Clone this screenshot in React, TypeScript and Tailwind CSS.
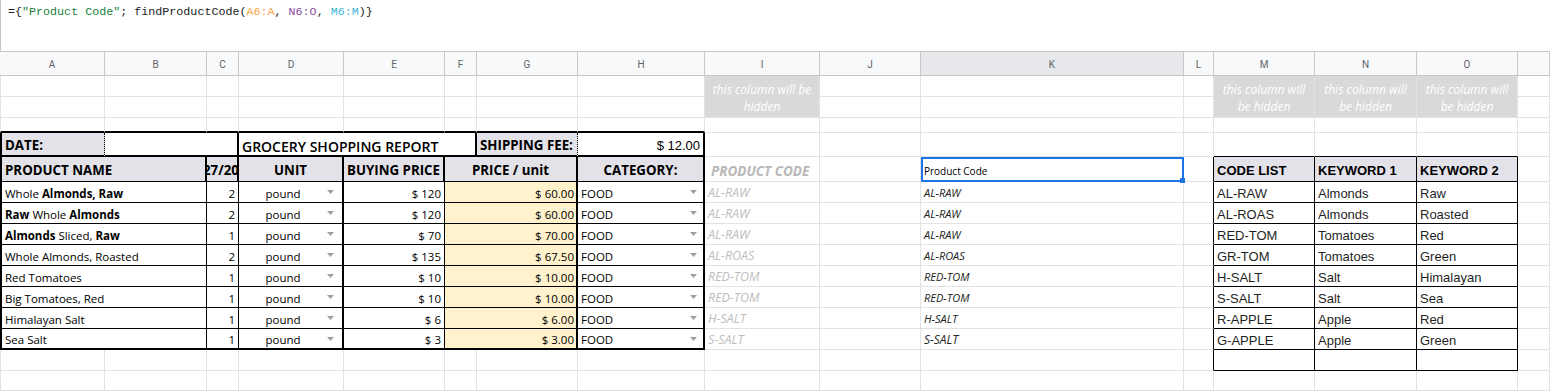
import type { ReactNode } from "react";

const COLS =
  "grid grid-cols-[105px_102px_32px_105px_101px_32px_101px_127px_115px_101px_263px_30px_101px_102px_101px_32px]";

const g = "border-r border-b border-r-[#e2e2e2] border-b-[#e2e2e2]";
const gA = "border-l border-l-[#e2e2e2] border-r border-b border-r-[#e2e2e2] border-b-[#e2e2e2]";
const lBlack = "border-r border-r-black border-b border-b-[#e2e2e2]";
const codeCell = "border-r border-r-black border-b border-b-black";
const head = "border-b border-b-black bg-[#e3e2e8] pt-[4px] text-[13.3px] font-bold";

interface Product {
  name: [string, boolean][];
  qty: number;
  buy: string;
  price: string;
  code: string;
}

const products: Product[] = [
  { name: [["Whole ", false], ["Almonds, Raw", true]], qty: 2, buy: "$ 120", price: "$ 60.00", code: "AL-RAW" },
  { name: [["Raw", true], [" Whole ", false], ["Almonds", true]], qty: 2, buy: "$ 120", price: "$ 60.00", code: "AL-RAW" },
  { name: [["Almonds", true], [" Sliced, ", false], ["Raw", true]], qty: 1, buy: "$ 70", price: "$ 70.00", code: "AL-RAW" },
  { name: [["Whole Almonds, Roasted", false]], qty: 2, buy: "$ 135", price: "$ 67.50", code: "AL-ROAS" },
  { name: [["Red Tomatoes", false]], qty: 1, buy: "$ 10", price: "$ 10.00", code: "RED-TOM" },
  { name: [["Big Tomatoes, Red", false]], qty: 1, buy: "$ 10", price: "$ 10.00", code: "RED-TOM" },
  { name: [["Himalayan Salt", false]], qty: 1, buy: "$ 6", price: "$ 6.00", code: "H-SALT" },
  { name: [["Sea Salt", false]], qty: 1, buy: "$ 3", price: "$ 3.00", code: "S-SALT" },
];

const codeList = [
  ["AL-RAW", "Almonds", "Raw"],
  ["AL-ROAS", "Almonds", "Roasted"],
  ["RED-TOM", "Tomatoes", "Red"],
  ["GR-TOM", "Tomatoes", "Green"],
  ["H-SALT", "Salt", "Himalayan"],
  ["S-SALT", "Salt", "Sea"],
  ["R-APPLE", "Apple", "Red"],
  ["G-APPLE", "Apple", "Green"],
];

function Cell({ c = "", children }: { c?: string; children?: ReactNode }) {
  return (
    <div className={`flex min-w-0 items-center overflow-hidden whitespace-nowrap ${c}`}>
      {children}
    </div>
  );
}

function Note({ text }: { text: string }) {
  return (
    <div className="row-span-2 flex items-center justify-center border-r border-b border-r-[#e2e2e2] border-b-[#e2e2e2] bg-[#d9d9d9] px-[4px] pt-[2px] text-center text-[12px] leading-[17px] text-white italic">
      {text}
    </div>
  );
}

function Arrow() {
  return (
    <svg width="7" height="4" viewBox="0 0 7 4" className="mb-[3px] shrink-0">
      <path d="M0 0h7L3.5 4z" fill="#a0a0a0" />
    </svg>
  );
}

function Blank({ c }: { c: string }) {
  return <div className={c} />;
}

export default function App() {
  return (
    <div className="h-[391px] w-[1550px] overflow-hidden bg-white font-['Open_Sans',sans-serif] text-black">
      {/* formula bar */}
      <div className="h-[52px] border-b border-l border-[#c4c7c5] pt-[4px] pl-[7px] font-['Liberation_Mono',monospace] text-[11.7px] leading-[16px] text-[#222]">
        <span>{"={"}</span>
        <span className="text-[#188038]">"Product Code"</span>
        <span>; findProductCode(</span>
        <span className="text-[#f6a54a]">A6:A</span>
        <span>, </span>
        <span className="text-[#8e4aa0]">N6:O</span>
        <span>, </span>
        <span className="text-[#3cb4d8]">M6:M</span>
        <span>{")}"}</span>
      </div>

      {/* column letters */}
      <div className={`${COLS} h-[24px] border-b border-[#c4c7c5] font-['Roboto',sans-serif] text-[10px] text-[#5f6368]`}>
        {"ABCDEFGHIJKLMNO ".split("").map((l, i) => (
          <div
            key={i}
            className={`flex items-center justify-center border-r border-[#c9c9c9] pt-[1px] ${l === "K" ? "bg-[#e6e8eb]" : "bg-[#f8f9fa]"}`}
          >
            {l}
          </div>
        ))}
      </div>

      {/* sheet */}
      <div className={`${COLS} grid-rows-[21px_21px_15px_24px_25px_repeat(9,21px)_20px] text-[11.5px]`}>
        {/* rows 1-2 */}
        <Blank c={gA} />
        <Blank c={g} />
        <Blank c={g} />
        <Blank c={g} />
        <Blank c={g} />
        <Blank c={g} />
        <Blank c={g} />
        <Blank c={g} />
        <Note text="this column will be hidden" />
        <Blank c={g} />
        <Blank c={g} />
        <Blank c={g} />
        <Note text="this column will be hidden" />
        <Note text="this column will be hidden" />
        <Note text="this column will be hidden" />
        <Blank c={g} />
        <Blank c={gA} />
        <Blank c={g} />
        <Blank c={g} />
        <Blank c={g} />
        <Blank c={g} />
        <Blank c={g} />
        <Blank c={g} />
        <Blank c={g} />
        <Blank c={g} />
        <Blank c={g} />
        <Blank c={g} />
        <Blank c={g} />

        {/* row 3 */}
        <Blank c="border-l border-l-[#e2e2e2] border-r border-r-[#e2e2e2] border-b-2 border-b-black" />
        <Blank c="border-r border-r-[#e2e2e2] border-b-2 border-b-black" />
        <Blank c="border-r border-r-[#e2e2e2] border-b-2 border-b-black" />
        <Blank c="border-r border-r-[#e2e2e2] border-b-2 border-b-black" />
        <Blank c="border-r border-r-[#e2e2e2] border-b-2 border-b-black" />
        <Blank c="border-r border-r-[#e2e2e2] border-b-2 border-b-black" />
        <Blank c="border-r border-r-[#e2e2e2] border-b-2 border-b-black" />
        <Blank c="border-r border-r-[#e2e2e2] border-b-2 border-b-black" />
        <Blank c={g} />
        <Blank c={g} />
        <Blank c={g} />
        <Blank c={g} />
        <Blank c={g} />
        <Blank c={g} />
        <Blank c={g} />
        <Blank c={g} />

        {/* row 4 */}
        <Cell c="border-l-2 border-l-black border-r border-r-black ![border-right-style:dotted] border-b-2 border-b-black bg-[#e3e2e8] pt-[4px] pl-[3px] text-[13.3px] font-bold">
          DATE:
        </Cell>
        <Cell c="col-span-2 border-r-2 border-r-black border-b-2 border-b-black" />
        <Cell c="col-span-3 border-r-2 border-r-black border-b-2 border-b-black pt-[4px] pl-[3px] text-[14px] font-semibold">
          GROCERY SHOPPING REPORT
        </Cell>
        <Cell c="border-r border-r-black ![border-right-style:dotted] border-b-2 border-b-black bg-[#e3e2e8] pt-[4px] pl-[3px] text-[13.3px] font-bold">
          SHIPPING FEE:
        </Cell>
        <Cell c="justify-end border-r-2 border-r-black border-b-2 border-b-black pt-[4px] pr-[3px] font-['Liberation_Sans',Arial,sans-serif] text-[13px]">
          $ 12.00
        </Cell>
        <Blank c={g} />
        <Blank c={g} />
        <Blank c={g} />
        <Blank c={g} />
        <Blank c="border-r border-b border-r-[#e2e2e2] border-b-black" />
        <Blank c="border-r border-b border-r-[#e2e2e2] border-b-black" />
        <Blank c="border-r border-b border-r-[#e2e2e2] border-b-black" />
        <Blank c={g} />

        {/* row 5 */}
        <Cell c={`col-span-2 border-l-2 border-l-black border-r-2 border-r-black ${head} pl-[3px]`}>PRODUCT NAME</Cell>
        <Cell c={`justify-center border-r-2 border-r-black ${head}`}>1/27/2023</Cell>
        <Cell c={`justify-center border-r-2 border-r-black ${head}`}>UNIT</Cell>
        <Cell c={`justify-center border-r-2 border-r-black ${head}`}>BUYING PRICE</Cell>
        <Cell c={`col-span-2 justify-center border-r-2 border-r-black ${head}`}>PRICE / unit</Cell>
        <Cell c={`justify-center border-r-2 border-r-black ${head}`}>CATEGORY:</Cell>
        <Cell c={`${g} pt-[4px] pl-[6px] text-[13.5px] font-bold text-[#b7b7b7] italic`}>PRODUCT CODE</Cell>
        <Blank c={g} />
        <div className="relative flex items-center border-2 border-[#1a73e8] pt-[3px] pl-[1px] text-[10px]">
          Product Code
          <span className="absolute -right-[3px] -bottom-[3px] h-[5px] w-[5px] bg-[#1a73e8]" />
        </div>
        <Blank c={lBlack} />
        {["CODE LIST", "KEYWORD 1", "KEYWORD 2"].map((h) => (
          <Cell
            key={h}
            c={`${codeCell} bg-[#e3e2e8] pt-[4px] pl-[3px] font-['Liberation_Sans',Arial,sans-serif] text-[13px] font-bold`}
          >
            {h}
          </Cell>
        ))}
        <Blank c={g} />

        {/* data rows */}
        {products.map((p, i) => {
          const last = i === products.length - 1;
          const b = last ? "border-b-2 border-b-black" : "border-b border-b-black";
          return [
            <Cell key={`a${i}`} c={`col-span-2 border-l-2 border-l-black border-r border-r-black ${b} pt-[3px] pl-[3px]`}>
              {p.name.map(([t, bold], j) => (
                <span key={j} className={bold ? "font-bold" : ""}>
                  {t.replace(/ /g, "\u00a0")}
                </span>
              ))}
            </Cell>,
            <Cell key={`c${i}`} c={`justify-end border-r border-r-black ${b} pt-[3px] pr-[3px]`}>
              {p.qty}
            </Cell>,
            <Cell key={`d${i}`} c={`border-r-2 border-r-black ${b} pt-[3px] pr-[8px]`}>
              <span className="flex-1 text-center">pound</span>
              <Arrow />
            </Cell>,
            <Cell key={`e${i}`} c={`justify-end border-r border-r-black ${b} pt-[3px] pr-[3px]`}>
              {p.buy}
            </Cell>,
            <Cell key={`f${i}`} c={`col-span-2 justify-end border-r-2 border-r-black ${b} bg-[#fff2cc] pt-[3px] pr-[2px]`}>
              {p.price}
            </Cell>,
            <Cell key={`h${i}`} c={`border-r-2 border-r-black ${b} pt-[3px] pr-[6px] pl-[3px]`}>
              <span className="flex-1">FOOD</span>
              <Arrow />
            </Cell>,
            <Cell key={`i${i}`} c={`${g} pt-[3px] pl-[3px] text-[12.5px] text-[#bdbdbd] italic`}>
              {p.code}
            </Cell>,
            <Blank key={`j${i}`} c={g} />,
            <Cell key={`k${i}`} c={`${g} pt-[2px] pl-[3px] text-[#222] italic ${last ? "text-[12px]" : "text-[11px]"}`}>
              {p.code}
            </Cell>,
            <Blank key={`l${i}`} c={lBlack} />,
            ...codeList[i].map((v, j) => (
              <Cell
                key={`m${i}${j}`}
                c={`${codeCell} pt-[3px] pl-[3px] font-['Liberation_Sans',Arial,sans-serif] text-[13px] text-[#1f1f1f]`}
              >
                {v}
              </Cell>
            )),
            <Blank key={`p${i}`} c={g} />,
          ];
        })}

        {/* row 13 */}
        <Blank c={gA} />
        <Blank c={g} />
        <Blank c={g} />
        <Blank c={g} />
        <Blank c={g} />
        <Blank c={g} />
        <Blank c={g} />
        <Blank c={g} />
        <Blank c={g} />
        <Blank c={g} />
        <Blank c={g} />
        <Blank c={lBlack} />
        <Blank c={codeCell} />
        <Blank c={codeCell} />
        <Blank c={codeCell} />
        <Blank c={g} />

        {/* row 14 */}
        {"ABCDEFGHIJKLMNOP".split("").map((l) => (
          <Blank key={`r14${l}`} c={l === "A" ? gA : g} />
        ))}
      </div>
    </div>
  );
}
